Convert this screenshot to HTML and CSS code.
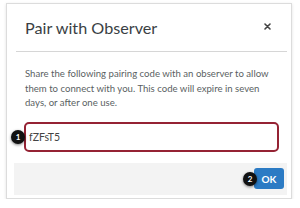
FILE: index.html
```html
<!DOCTYPE html>
<html>
<head>
<meta charset="utf-8">
<link rel="stylesheet" href="styles.css">
</head>
<body>
<div class="dialog">
  <div class="header">
    <h1 class="title">Pair with Observer</h1>
    <svg class="close" width="7" height="7" viewBox="0 0 7 7"><path d="M1 1L6 6M6 1L1 6" stroke="#444" stroke-width="1.6" stroke-linecap="round"/></svg>
  </div>
  <div class="divider"></div>
  <div class="body">
    <p class="text">Share the following pairing code with an observer to allow them to connect with you. This code will expire in seven days, or after one use.</p>
    <div class="field">
      <div class="input">fZFsT5</div>
      <span class="badge badge-one">1</span>
    </div>
  </div>
  <div class="footer">
    <div class="okwrap">
      <span class="badge badge-two">2</span>
      <button class="ok">OK</button>
    </div>
  </div>
</div>
</body>
</html>
```
FILE: styles.css
```css
html, body { margin: 0; padding: 0; background: #fff; }
body { font-family: Lato, "Open Sans", sans-serif; }
.dialog {
  margin: 3px 0 0 6px;
  width: 286px;
  height: 196px;
  box-sizing: border-box;
  border: 1px solid #dcdcdc;
  box-shadow: 0 1px 3px rgba(0,0,0,0.12);
  display: flex;
  flex-direction: column;
}
.header {
  height: 47px;
  display: flex;
  align-items: center;
  justify-content: space-between;
  padding: 0 20px 0 18px;
}
.title {
  margin: 0;
  font-size: 16.2px;
  font-weight: 400;
  color: #3a3f44;
  letter-spacing: 0;
}
.close { display: block; margin-top: -2px; }
.divider {
  height: 1px;
  background: #d6d6d6;
  margin: 0 4px 0 9px;
}
.body {
  padding: 15px 12px 0 18px;
}
.text {
  margin: 0;
  font-size: 9.6px;
  line-height: 14.5px;
  color: #5b5f63;
}
.field {
  position: relative;
  margin: 11px 0 0 -1px;
}
.input {
  height: 30px;
  box-sizing: border-box;
  border: 2px solid #952334;
  border-radius: 5px;
  padding: 0 0 0 3px;
  display: flex;
  align-items: center;
  font-size: 10.5px;
  color: #444;
}
.badge {
  position: absolute;
  width: 14px;
  height: 14px;
  border-radius: 50%;
  background: #111;
  color: #fff;
  font-size: 8px;
  font-weight: 700;
  display: flex;
  align-items: center;
  justify-content: center;
  box-shadow: 0 1px 3px rgba(0,0,0,0.5);
}
.badge-one { left: -13px; top: 8px; }
.footer {
  margin: 11px 4px 0 7px;
  height: 32px;
  background: #f3f3f3;
  display: flex;
  justify-content: flex-end;
  align-items: center;
  padding-right: 3px;
}
.okwrap { position: relative; }
.ok {
  display: block;
  width: 30px;
  height: 21px;
  border: none;
  border-radius: 3px;
  background: #2c7bc4;
  color: #fff;
  font-family: Lato, sans-serif;
  font-size: 10px;
  font-weight: 700;
  padding: 0;
}
.badge-two { left: -11px; top: 4px; }
```
